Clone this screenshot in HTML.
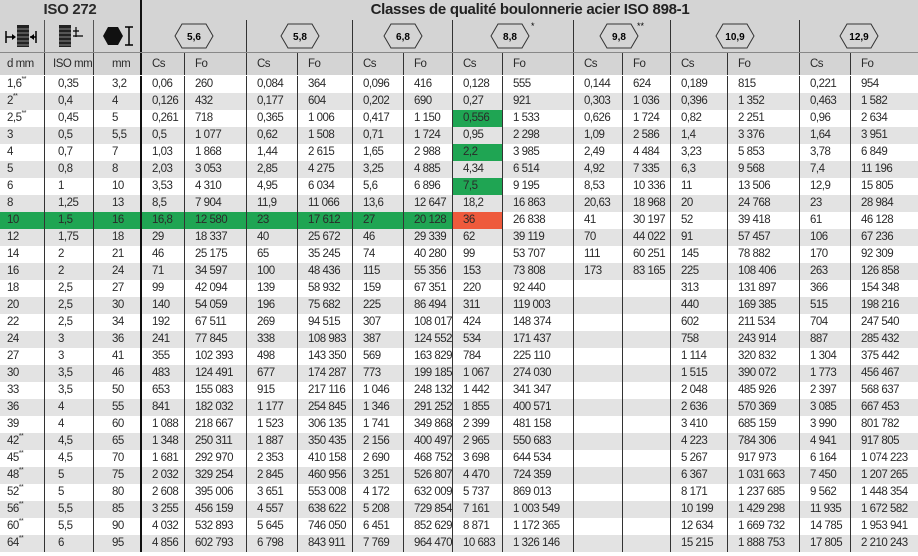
<!DOCTYPE html><html><head><meta charset="utf-8"><style>
body{margin:0;width:918px;height:556px;overflow:hidden;background:#fff;font-family:"Liberation Sans",sans-serif;color:#2a2a2a}
.r{display:flex;height:17px;line-height:17px;font-size:11.5px;letter-spacing:-0.5px}
.r.g{background:#e3e3e3}
.r>span{box-sizing:border-box;flex:none;padding-left:10px;border-left:1px solid #333;white-space:nowrap;overflow:hidden;height:100%}
.r>span:nth-child(1){width:44px;padding-left:7px;border-left:none}
.r>span:nth-child(2){width:49px;padding-left:13px}
.r>span:nth-child(3){width:47px;padding-left:18px}
.r>span:nth-child(4){width:44px;border-left:2px solid #111}
.r>span:nth-child(5){width:62px}
.r>span:nth-child(6){width:51px}
.r>span:nth-child(7){width:55px}
.r>span:nth-child(8){width:51px}
.r>span:nth-child(9){width:49px}
.r>span:nth-child(10){width:50px}
.r>span:nth-child(11){width:71px}
.r>span:nth-child(12){width:49px}
.r>span:nth-child(13){width:48px}
.r>span:nth-child(14){width:57px}
.r>span:nth-child(15){width:72px}
.r>span:nth-child(16){width:51px}
.r>span:nth-child(17){width:68px}
.gr{background:#1fa553}
.rd{background:#ee5a3c}
.hd{background:#d4d4d4}
.h1{display:flex;height:20px;line-height:20px;font-weight:bold;font-size:15px;letter-spacing:-0.3px;text-align:center}
.h2{display:flex;height:33px;border-bottom:1px solid #888;box-sizing:border-box}
.h2>div{box-sizing:border-box;display:flex;align-items:center;justify-content:center;height:100%}
.r.h3{height:22px;line-height:22px;background:#d4d4d4}
sup{font-size:7px;vertical-align:top;line-height:8px}
</style></head><body>
<div class="hd">
<div class="h1"><div style="width:140px">ISO 272</div><div style="width:778px;border-left:2px solid #111;box-sizing:border-box;color:#222">Classes de qualité boulonnerie acier ISO 898-1</div></div>
<div class="h2">
<div style="width:44px"><svg width="40" height="28" viewBox="0 0 40 28"><path d="M4 9v12M4 15h6" stroke="#000" stroke-width="1.5"/><path d="M10 12l4 3-4 3z" fill="#000"/><rect x="15" y="3" width="12" height="22" fill="#222"/><path d="M15 7h12M15 11h12M15 15h12M15 19h12M15 23h12" stroke="#888"/><path d="M32 12l-4 3 4 3z" fill="#000"/><path d="M34 9v12M28 15h6" stroke="#000" stroke-width="1.5"/></svg></div>
<div style="width:49px;border-left:1px solid #555"><svg width="40" height="28" viewBox="0 0 40 28"><rect x="10" y="3" width="12" height="22" fill="#222"/><path d="M10 7h12M10 11h12M10 15h12M10 19h12M10 23h12" stroke="#888"/><path d="M24 9h6M24 14h10M27 5v10" stroke="#000" stroke-width="1.2"/></svg></div>
<div style="width:47px;border-left:1px solid #555"><svg width="40" height="28" viewBox="0 0 40 28"><polygon points="6,14 11,5 21,5 26,14 21,23 11,23" fill="#111"/><path d="M28 5h8M28 23h8M32 5v18" stroke="#000" stroke-width="1.5"/></svg></div>
<div style="width:106px;border-left:2px solid #111"><svg width="44" height="30" viewBox="0 0 44 30"><polygon points="3,15 10,3 34,3 41,15 34,27 10,27" fill="none" stroke="#333"/><text x="22" y="19" font-size="10" font-weight="bold" text-anchor="middle" font-family="Liberation Sans">5,6</text></svg></div>
<div style="width:106px;border-left:1px solid #333"><svg width="44" height="30" viewBox="0 0 44 30"><polygon points="3,15 10,3 34,3 41,15 34,27 10,27" fill="none" stroke="#333"/><text x="22" y="19" font-size="10" font-weight="bold" text-anchor="middle" font-family="Liberation Sans">5,8</text></svg></div>
<div style="width:100px;border-left:1px solid #333"><svg width="44" height="30" viewBox="0 0 44 30"><polygon points="3,15 10,3 34,3 41,15 34,27 10,27" fill="none" stroke="#333"/><text x="22" y="19" font-size="10" font-weight="bold" text-anchor="middle" font-family="Liberation Sans">6,8</text></svg></div>
<div style="width:121px;border-left:1px solid #333"><svg width="50" height="30" viewBox="0 0 50 30"><polygon points="3,15 10,3 34,3 41,15 34,27 10,27" fill="none" stroke="#333"/><text x="22" y="19" font-size="10" font-weight="bold" text-anchor="middle" font-family="Liberation Sans">8,8</text><text x="43" y="8" font-size="9">*</text></svg></div>
<div style="width:97px;border-left:1px solid #333"><svg width="50" height="30" viewBox="0 0 50 30"><polygon points="3,15 10,3 34,3 41,15 34,27 10,27" fill="none" stroke="#333"/><text x="22" y="19" font-size="10" font-weight="bold" text-anchor="middle" font-family="Liberation Sans">9,8</text><text x="40" y="8" font-size="9">**</text></svg></div>
<div style="width:129px;border-left:1px solid #333"><svg width="44" height="30" viewBox="0 0 44 30"><polygon points="3,15 10,3 34,3 41,15 34,27 10,27" fill="none" stroke="#333"/><text x="22" y="19" font-size="10" font-weight="bold" text-anchor="middle" font-family="Liberation Sans">10,9</text></svg></div>
<div style="width:119px;border-left:1px solid #333"><svg width="44" height="30" viewBox="0 0 44 30"><polygon points="3,15 10,3 34,3 41,15 34,27 10,27" fill="none" stroke="#333"/><text x="22" y="19" font-size="10" font-weight="bold" text-anchor="middle" font-family="Liberation Sans">12,9</text></svg></div>
</div>
<div class="r h3"><span>d mm</span><span style="padding-left:8px">ISO mm</span><span>mm</span><span>Cs</span><span>Fo</span><span>Cs</span><span>Fo</span><span>Cs</span><span>Fo</span><span>Cs</span><span>Fo</span><span>Cs</span><span>Fo</span><span>Cs</span><span>Fo</span><span>Cs</span><span>Fo</span></div>
</div>
<div style="height:1px"></div>
<div class="r"><span>1,6<sup>**</sup></span><span>0,35</span><span>3,2</span><span>0,06</span><span>260</span><span>0,084</span><span>364</span><span>0,096</span><span>416</span><span>0,128</span><span>555</span><span>0,144</span><span>624</span><span>0,189</span><span>815</span><span>0,221</span><span>954</span></div>
<div class="r g"><span>2<sup>**</sup></span><span>0,4</span><span>4</span><span>0,126</span><span>432</span><span>0,177</span><span>604</span><span>0,202</span><span>690</span><span>0,27</span><span>921</span><span>0,303</span><span>1 036</span><span>0,396</span><span>1 352</span><span>0,463</span><span>1 582</span></div>
<div class="r"><span>2,5<sup>**</sup></span><span>0,45</span><span>5</span><span>0,261</span><span>718</span><span>0,365</span><span>1 006</span><span>0,417</span><span>1 150</span><span class="gr">0,556</span><span>1 533</span><span>0,626</span><span>1 724</span><span>0,82</span><span>2 251</span><span>0,96</span><span>2 634</span></div>
<div class="r g"><span>3</span><span>0,5</span><span>5,5</span><span>0,5</span><span>1 077</span><span>0,62</span><span>1 508</span><span>0,71</span><span>1 724</span><span>0,95</span><span>2 298</span><span>1,09</span><span>2 586</span><span>1,4</span><span>3 376</span><span>1,64</span><span>3 951</span></div>
<div class="r"><span>4</span><span>0,7</span><span>7</span><span>1,03</span><span>1 868</span><span>1,44</span><span>2 615</span><span>1,65</span><span>2 988</span><span class="gr">2,2</span><span>3 985</span><span>2,49</span><span>4 484</span><span>3,23</span><span>5 853</span><span>3,78</span><span>6 849</span></div>
<div class="r g"><span>5</span><span>0,8</span><span>8</span><span>2,03</span><span>3 053</span><span>2,85</span><span>4 275</span><span>3,25</span><span>4 885</span><span>4,34</span><span>6 514</span><span>4,92</span><span>7 335</span><span>6,3</span><span>9 568</span><span>7,4</span><span>11 196</span></div>
<div class="r"><span>6</span><span>1</span><span>10</span><span>3,53</span><span>4 310</span><span>4,95</span><span>6 034</span><span>5,6</span><span>6 896</span><span class="gr">7,5</span><span>9 195</span><span>8,53</span><span>10 336</span><span>11</span><span>13 506</span><span>12,9</span><span>15 805</span></div>
<div class="r g"><span>8</span><span>1,25</span><span>13</span><span>8,5</span><span>7 904</span><span>11,9</span><span>11 066</span><span>13,6</span><span>12 647</span><span>18,2</span><span>16 863</span><span>20,63</span><span>18 968</span><span>20</span><span>24 768</span><span>23</span><span>28 984</span></div>
<div class="r"><span class="gr">10</span><span class="gr">1,5</span><span class="gr">16</span><span class="gr">16,8</span><span class="gr">12 580</span><span class="gr">23</span><span class="gr">17 612</span><span class="gr">27</span><span class="gr">20 128</span><span class="rd">36</span><span>26 838</span><span>41</span><span>30 197</span><span>52</span><span>39 418</span><span>61</span><span>46 128</span></div>
<div class="r g"><span>12</span><span>1,75</span><span>18</span><span>29</span><span>18 337</span><span>40</span><span>25 672</span><span>46</span><span>29 339</span><span>62</span><span>39 119</span><span>70</span><span>44 022</span><span>91</span><span>57 457</span><span>106</span><span>67 236</span></div>
<div class="r"><span>14</span><span>2</span><span>21</span><span>46</span><span>25 175</span><span>65</span><span>35 245</span><span>74</span><span>40 280</span><span>99</span><span>53 707</span><span>111</span><span>60 251</span><span>145</span><span>78 882</span><span>170</span><span>92 309</span></div>
<div class="r g"><span>16</span><span>2</span><span>24</span><span>71</span><span>34 597</span><span>100</span><span>48 436</span><span>115</span><span>55 356</span><span>153</span><span>73 808</span><span>173</span><span>83 165</span><span>225</span><span>108 406</span><span>263</span><span>126 858</span></div>
<div class="r"><span>18</span><span>2,5</span><span>27</span><span>99</span><span>42 094</span><span>139</span><span>58 932</span><span>159</span><span>67 351</span><span>220</span><span>92 440</span><span></span><span></span><span>313</span><span>131 897</span><span>366</span><span>154 348</span></div>
<div class="r g"><span>20</span><span>2,5</span><span>30</span><span>140</span><span>54 059</span><span>196</span><span>75 682</span><span>225</span><span>86 494</span><span>311</span><span>119 003</span><span></span><span></span><span>440</span><span>169 385</span><span>515</span><span>198 216</span></div>
<div class="r"><span>22</span><span>2,5</span><span>34</span><span>192</span><span>67 511</span><span>269</span><span>94 515</span><span>307</span><span>108 017</span><span>424</span><span>148 374</span><span></span><span></span><span>602</span><span>211 534</span><span>704</span><span>247 540</span></div>
<div class="r g"><span>24</span><span>3</span><span>36</span><span>241</span><span>77 845</span><span>338</span><span>108 983</span><span>387</span><span>124 552</span><span>534</span><span>171 437</span><span></span><span></span><span>758</span><span>243 914</span><span>887</span><span>285 432</span></div>
<div class="r"><span>27</span><span>3</span><span>41</span><span>355</span><span>102 393</span><span>498</span><span>143 350</span><span>569</span><span>163 829</span><span>784</span><span>225 110</span><span></span><span></span><span>1 114</span><span>320 832</span><span>1 304</span><span>375 442</span></div>
<div class="r g"><span>30</span><span>3,5</span><span>46</span><span>483</span><span>124 491</span><span>677</span><span>174 287</span><span>773</span><span>199 185</span><span>1 067</span><span>274 030</span><span></span><span></span><span>1 515</span><span>390 072</span><span>1 773</span><span>456 467</span></div>
<div class="r"><span>33</span><span>3,5</span><span>50</span><span>653</span><span>155 083</span><span>915</span><span>217 116</span><span>1 046</span><span>248 132</span><span>1 442</span><span>341 347</span><span></span><span></span><span>2 048</span><span>485 926</span><span>2 397</span><span>568 637</span></div>
<div class="r g"><span>36</span><span>4</span><span>55</span><span>841</span><span>182 032</span><span>1 177</span><span>254 845</span><span>1 346</span><span>291 252</span><span>1 855</span><span>400 571</span><span></span><span></span><span>2 636</span><span>570 369</span><span>3 085</span><span>667 453</span></div>
<div class="r"><span>39</span><span>4</span><span>60</span><span>1 088</span><span>218 667</span><span>1 523</span><span>306 135</span><span>1 741</span><span>349 868</span><span>2 399</span><span>481 158</span><span></span><span></span><span>3 410</span><span>685 159</span><span>3 990</span><span>801 782</span></div>
<div class="r g"><span>42<sup>**</sup></span><span>4,5</span><span>65</span><span>1 348</span><span>250 311</span><span>1 887</span><span>350 435</span><span>2 156</span><span>400 497</span><span>2 965</span><span>550 683</span><span></span><span></span><span>4 223</span><span>784 306</span><span>4 941</span><span>917 805</span></div>
<div class="r"><span>45<sup>**</sup></span><span>4,5</span><span>70</span><span>1 681</span><span>292 970</span><span>2 353</span><span>410 158</span><span>2 690</span><span>468 752</span><span>3 698</span><span>644 534</span><span></span><span></span><span>5 267</span><span>917 973</span><span>6 164</span><span>1 074 223</span></div>
<div class="r g"><span>48<sup>**</sup></span><span>5</span><span>75</span><span>2 032</span><span>329 254</span><span>2 845</span><span>460 956</span><span>3 251</span><span>526 807</span><span>4 470</span><span>724 359</span><span></span><span></span><span>6 367</span><span>1 031 663</span><span>7 450</span><span>1 207 265</span></div>
<div class="r"><span>52<sup>**</sup></span><span>5</span><span>80</span><span>2 608</span><span>395 006</span><span>3 651</span><span>553 008</span><span>4 172</span><span>632 009</span><span>5 737</span><span>869 013</span><span></span><span></span><span>8 171</span><span>1 237 685</span><span>9 562</span><span>1 448 354</span></div>
<div class="r g"><span>56<sup>**</sup></span><span>5,5</span><span>85</span><span>3 255</span><span>456 159</span><span>4 557</span><span>638 622</span><span>5 208</span><span>729 854</span><span>7 161</span><span>1 003 549</span><span></span><span></span><span>10 199</span><span>1 429 298</span><span>11 935</span><span>1 672 582</span></div>
<div class="r"><span>60<sup>**</sup></span><span>5,5</span><span>90</span><span>4 032</span><span>532 893</span><span>5 645</span><span>746 050</span><span>6 451</span><span>852 629</span><span>8 871</span><span>1 172 365</span><span></span><span></span><span>12 634</span><span>1 669 732</span><span>14 785</span><span>1 953 941</span></div>
<div class="r g"><span>64<sup>**</sup></span><span>6</span><span>95</span><span>4 856</span><span>602 793</span><span>6 798</span><span>843 911</span><span>7 769</span><span>964 470</span><span>10 683</span><span>1 326 146</span><span></span><span></span><span>15 215</span><span>1 888 753</span><span>17 805</span><span>2 210 243</span></div>
</body></html>
